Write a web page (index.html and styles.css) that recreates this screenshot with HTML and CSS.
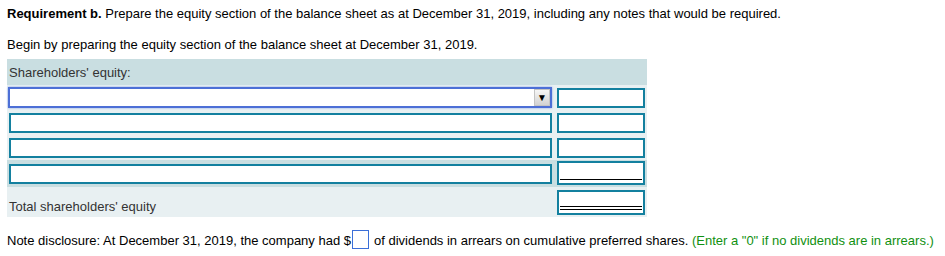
FILE: index.html
```html
<!DOCTYPE html>
<html lang="en">
<head>
  <meta charset="UTF-8" />
  <title>Requirement b</title>
  <link rel="stylesheet" href="styles.css">
</head>
<body>
  <p class="req"><strong>Requirement b.</strong> Prepare the equity section of the balance sheet as at December 31, 2019, including any notes that would be required.</p>
  <p class="lead">Begin by preparing the equity section of the balance sheet at December 31, 2019.</p>

  <div class="sheet">
    <div class="row head">
      <span class="label">Shareholders' equity:</span>
    </div>
    <div class="row light">
      <div class="select"><span class="drop">&#9660;</span></div>
      <input class="amt" type="text" />
    </div>
    <div class="row light">
      <input class="desc" type="text" />
      <input class="amt" type="text" />
    </div>
    <div class="row light">
      <input class="desc" type="text" />
      <input class="amt" type="text" />
    </div>
    <div class="row dark tall">
      <input class="desc" type="text" />
      <div class="amt-box single"></div>
    </div>
    <div class="row light total">
      <span class="label">Total shareholders' equity</span>
      <div class="amt-box double"></div>
    </div>
  </div>

  <p class="note">Note disclosure: At December 31, 2019, the company had $<input class="small" type="text" />of dividends in arrears on cumulative preferred shares. <span class="hint">(Enter a "0" if no dividends are in arrears.)</span></p>
</body>
</html>
```

FILE: styles.css
```css
:root {
  --head-bg: #c9dee1;
  --row-bg: #e8f0f2;
  --field: #13809f;
  --focus: #4c6fd6;
}

body {
  margin: 0;
  padding: 0 7px;
  font-family: "Liberation Sans", Arial, sans-serif;
  font-size: 13px;
  color: #000;
}

p {
  margin: 0;
  line-height: 15px;
}

.req {
  padding-top: 6px;
}

.lead {
  margin-top: 16px;
}

.sheet {
  width: 640px;
  margin-top: 7px;
}

.row {
  display: flex;
  align-items: center;
  gap: 5px;
  height: 25px;
  padding: 0 2px;
  box-sizing: border-box;
}

.head {
  background-color: var(--head-bg);
  height: 26px;
}

.light {
  background-color: var(--row-bg);
}

.dark {
  background-color: var(--head-bg);
}

.tall {
  height: 27px;
}

.total {
  height: 30px;
  justify-content: space-between;
}

.label {
  color: #333;
}

.total .label {
  padding-top: 8px;
}

input {
  font: inherit;
  box-sizing: border-box;
  margin: 0;
  padding: 0;
  background: #fff;
  outline: none;
}

.desc {
  width: 543px;
  height: 20px;
  border: 2px solid var(--field);
}

.amt {
  width: 88px;
  height: 20px;
  border: 2px solid var(--field);
}

.select {
  width: 545px;
  height: 21px;
  margin-left: -1px;
  box-sizing: border-box;
  border: 2px solid var(--focus);
  box-shadow: 0 0 2px #8aa3ea;
  background: #fff;
  display: flex;
  justify-content: flex-end;
}

.drop {
  width: 16px;
  height: 17px;
  box-sizing: border-box;
  background: linear-gradient(#f6f6f6, #d2d2d2);
  border: 1px solid #c4c4c4;
  font-size: 10px;
  line-height: 16px;
  text-align: center;
  color: #000;
}

.amt-box {
  width: 88px;
  box-sizing: border-box;
  border: 2px solid var(--field);
  background: #fff;
  position: relative;
}

.single {
  height: 24px;
  margin-top: -2px;
}

.single::after {
  content: "";
  position: absolute;
  left: 1px;
  right: 1px;
  bottom: 3px;
  border-bottom: 1px solid #000;
}

.double {
  height: 25px;
}

.double::after {
  content: "";
  position: absolute;
  left: 1px;
  right: 1px;
  bottom: 3px;
  height: 2px;
  border-top: 1px solid #000;
  border-bottom: 1px solid #000;
}

.note {
  margin-top: 16px;
}

.small {
  width: 17px;
  height: 19px;
  border: 1px solid #3b6fd8;
  vertical-align: middle;
  margin: -4px 5px 0 1px;
}

.hint {
  color: #109010;
}
```
